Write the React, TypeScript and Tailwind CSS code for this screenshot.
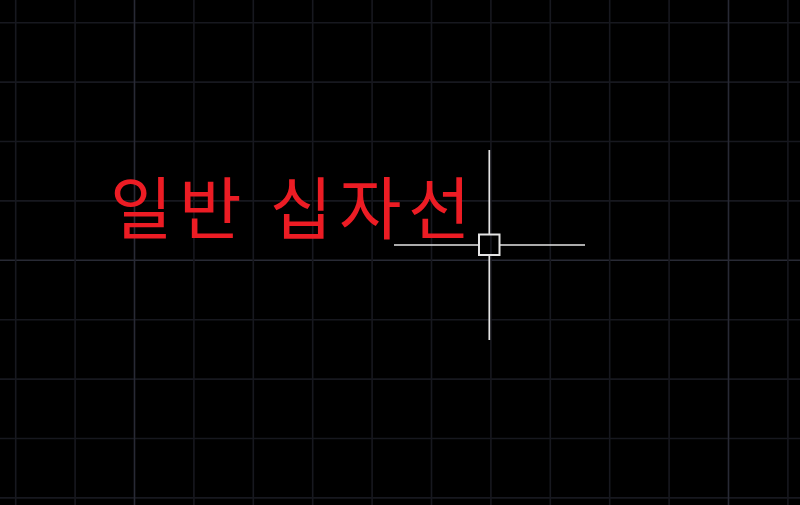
import React from 'react';

// Grid spacing read off the reference; major lines every 10 cells.
const STEP = 59.4;
const X0 = 15.7;
const Y0 = 22.7;

const vLines = Array.from({ length: 14 }, (_, i) => ({ x: X0 + STEP * i, major: i === 2 || i === 12 }));
const hLines = Array.from({ length: 9 }, (_, j) => ({ y: Y0 + STEP * j, major: j === 4 }));

function Grid() {
  return (
    <svg className="absolute inset-0" width={800} height={505} viewBox="0 0 800 505" aria-hidden="true">
      {hLines.map((l) => (
        <line key={`h${l.y}`} x1={0} x2={800} y1={l.y} y2={l.y} stroke={l.major ? '#282a35' : '#17181f'} strokeWidth={1.6} />
      ))}
      {vLines.map((l) => (
        <line key={`v${l.x}`} x1={l.x} x2={l.x} y1={0} y2={505} stroke={l.major ? '#282a35' : '#17181f'} strokeWidth={1.6} />
      ))}
    </svg>
  );
}

function Crosshair() {
  const cx = 489.3;
  const cy = 245;
  return (
    <svg className="absolute inset-0" width={800} height={505} viewBox="0 0 800 505" aria-hidden="true">
      <g stroke="#e4e4e4" strokeWidth={1.7} fill="none">
        <line x1={cx} x2={cx} y1={150} y2={235} />
        <line x1={cx} x2={cx} y1={255} y2={340} />
        <line x1={394} x2={479} y1={cy} y2={cy} />
        <line x1={499.5} x2={585} y1={cy} y2={cy} />
        <rect x={479} y={234.5} width={20.5} height={20.5} strokeWidth={2} />
      </g>
    </svg>
  );
}

export default function App() {
  return (
    <div className="relative w-[800px] h-[505px] bg-black overflow-hidden">
      <Grid />
      <span
        className="absolute left-[110px] top-[171px] text-[68px] leading-none tracking-[6.5px] text-[#ec1c24] whitespace-nowrap"
        style={{ fontFamily: '"Noto Sans CJK KR", "Noto Sans", sans-serif' }}
      >
        일반 십자선
      </span>
      <Crosshair />
    </div>
  );
}
